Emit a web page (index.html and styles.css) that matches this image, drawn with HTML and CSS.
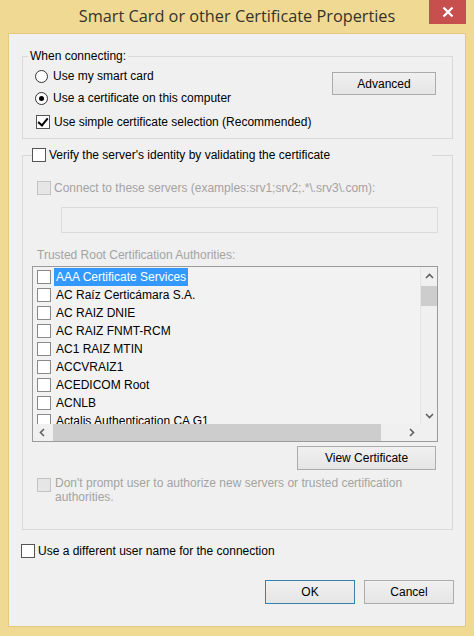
FILE: index.html
```html
<!DOCTYPE html>
<html lang="en">
<head>
    <meta charset="UTF-8">
    <title>Smart Card or other Certificate Properties</title>
    <link rel="stylesheet" href="styles.css">
</head>
<body>
    <div class="window">
        <div class="titlebar">
            <span class="title">Smart Card or other Certificate Properties</span>
            <button class="close" aria-label="Close">
                <svg width="12" height="10" viewBox="0 0 12 10">
                    <path d="M1.5 0.5 L10.5 9.5 M10.5 0.5 L1.5 9.5" stroke="#fff" stroke-width="2.2" fill="none"/>
                </svg>
            </button>
        </div>

        <div class="client">
            <!-- When connecting -->
            <fieldset class="group group-connect">
                <legend>When connecting:</legend>
                <div class="connect-body">
                    <div class="options">
                        <label class="opt"><span class="radio"></span>Use my smart card</label>
                        <label class="opt"><span class="radio on"></span>Use a certificate on this computer</label>
                        <label class="opt opt-check"><span class="check on"></span>Use simple certificate selection (Recommended)</label>
                    </div>
                    <button class="btn btn-advanced">Advanced</button>
                </div>
            </fieldset>

            <!-- Server validation -->
            <fieldset class="group group-verify">
                <legend><span class="check"></span>Verify the server's identity by validating the certificate</legend>

                <label class="opt opt-servers disabled"><span class="check off"></span>Connect to these servers (examples:srv1;srv2;.*\.srv3\.com):</label>
                <div class="textbox"></div>

                <div class="list-label">Trusted Root Certification Authorities:</div>
                <div class="list">
                    <div class="items">
                        <div class="item"><span class="check"></span><span class="name selected">AAA Certificate Services</span></div>
                        <div class="item"><span class="check"></span><span class="name">AC Raíz Certicámara S.A.</span></div>
                        <div class="item"><span class="check"></span><span class="name">AC RAIZ DNIE</span></div>
                        <div class="item"><span class="check"></span><span class="name">AC RAIZ FNMT-RCM</span></div>
                        <div class="item"><span class="check"></span><span class="name">AC1 RAIZ MTIN</span></div>
                        <div class="item"><span class="check"></span><span class="name">ACCVRAIZ1</span></div>
                        <div class="item"><span class="check"></span><span class="name">ACEDICOM Root</span></div>
                        <div class="item"><span class="check"></span><span class="name">ACNLB</span></div>
                        <div class="item"><span class="check"></span><span class="name">Actalis Authentication CA G1</span></div>
                    </div>
                    <div class="vscroll">
                        <span class="arrow">
                            <svg width="9" height="6" viewBox="0 0 9 6"><path d="M1 5 L4.5 1.5 L8 5" stroke="#606060" stroke-width="1.6" fill="none"/></svg>
                        </span>
                        <span class="vthumb"></span>
                        <span class="arrow arrow-end">
                            <svg width="9" height="6" viewBox="0 0 9 6"><path d="M1 1 L4.5 4.5 L8 1" stroke="#606060" stroke-width="1.6" fill="none"/></svg>
                        </span>
                    </div>
                    <div class="hscroll">
                        <span class="arrow">
                            <svg width="6" height="9" viewBox="0 0 6 9"><path d="M5 1 L1.5 4.5 L5 8" stroke="#606060" stroke-width="1.6" fill="none"/></svg>
                        </span>
                        <span class="hthumb"></span>
                        <span class="arrow arrow-end">
                            <svg width="6" height="9" viewBox="0 0 6 9"><path d="M1 1 L4.5 4.5 L1 8" stroke="#606060" stroke-width="1.6" fill="none"/></svg>
                        </span>
                    </div>
                    <div class="corner"></div>
                </div>

                <div class="view-row">
                    <button class="btn btn-view">View Certificate</button>
                </div>

                <label class="opt opt-prompt disabled"><span class="check off"></span><span>Don't prompt user to authorize new servers or trusted certification authorities.</span></label>
            </fieldset>

            <label class="opt opt-user"><span class="check"></span>Use a different user name for the connection</label>

            <div class="actions">
                <button class="btn btn-default">OK</button>
                <button class="btn">Cancel</button>
            </div>
        </div>
    </div>
</body>
</html>
```

FILE: styles.css
```css
body {
    margin: 0;
    background-color: #f0d993;
    font-family: "Liberation Sans", Arial, sans-serif;
    font-size: 12px;
    color: #000;
}
.window {
    width: 474px;
    height: 636px;
    display: flex;
    flex-direction: column;
}
.titlebar {
    height: 33px;
    display: grid;
    grid-template-columns: 1fr auto 1fr;
    align-items: start;
}
.title {
    grid-column: 2;
    font-family: "Open Sans", "Noto Sans", sans-serif;
    font-size: 16.3px;
    line-height: 33px;
    color: #34342a;
    white-space: nowrap;
}
.close {
    grid-column: 3;
    justify-self: end;
    margin-right: 8px;
    width: 37px;
    height: 24px;
    padding: 0;
    border: none;
    background-color: #c7504f;
    display: flex;
    align-items: center;
    justify-content: center;
}
.client {
    height: 594px;
    margin: 0 8px;
    box-sizing: border-box;
    border: 1px solid #e3c97f;
    background-color: #f0f0f0;
    padding: 15px 12px 0 13px;
}

/* group boxes */
.group {
    margin: 0;
    padding: 0;
    min-width: 0;
    border: 1px solid #d9d9d9;
}
.group legend {
    padding: 0 2px;
    line-height: 15px;
}
.group-connect legend {
    margin-left: -7px;
}
.group-connect {
    padding: 1px 16px 5px 12px;
}
.connect-body {
    display: flex;
    justify-content: space-between;
    align-items: flex-start;
}
.group-verify {
    margin-top: 8px;
    padding: 16px 14px 25px 9px;
}
.group-verify legend {
    margin-left: 0;
    width: 400px;
    box-sizing: border-box;
    display: flex;
    align-items: center;
    gap: 3px;
    padding: 0;
    height: 16px;
}

/* options */
.opt {
    display: flex;
    align-items: center;
    gap: 5px;
    height: 22px;
}
.opt-check {
    margin-top: 2px;
    gap: 4px;
}
.opt-check .check {
    margin-left: 1px;
}
.disabled {
    color: #a3a3a3;
}
.radio {
    width: 11px;
    height: 11px;
    border: 1px solid #333;
    border-radius: 50%;
    background-color: #fff;
    position: relative;
    flex: none;
}
.radio.on::after {
    content: "";
    position: absolute;
    left: 3px;
    top: 3px;
    width: 5px;
    height: 5px;
    border-radius: 50%;
    background-color: #000;
}
.check {
    width: 12px;
    height: 12px;
    border: 1px solid #555;
    background-color: #fff;
    flex: none;
    position: relative;
}
.check.on::after {
    content: "";
    position: absolute;
    left: 3px;
    top: 0px;
    width: 4px;
    height: 8px;
    border: solid #000;
    border-width: 0 2px 2px 0;
    transform: rotate(40deg);
}
.check.off {
    background-color: #e6e6e6;
    border-color: #c4c4c4;
}
.opt-servers {
    height: 18px;
    margin-left: 5px;
    gap: 3px;
}
.textbox {
    margin: 10px 0 0 29px;
    height: 24px;
    border: 1px solid #dadada;
    background-color: #f0f0f0;
}
.list-label {
    margin: 15px 0 0 5px;
    line-height: 15px;
    color: #a3a3a3;
}

/* list box */
.list {
    margin-top: 3px;
    height: 176px;
    box-sizing: border-box;
    border: 1px solid #9b9b9b;
    background-color: #f2f2f2;
    display: grid;
    grid-template-columns: 1fr 17px;
    grid-template-rows: 1fr 17px;
    overflow: hidden;
}
.items {
    padding: 1px 0 0 4px;
    overflow: hidden;
}
.item {
    height: 18px;
    display: flex;
    align-items: center;
    gap: 3px;
    white-space: nowrap;
}
.item .check {
    border-color: #8a8a8a;
}
.name {
    padding: 0 2px;
    line-height: 18px;
}
.name.selected {
    background-color: #3399ff;
    color: #fff;
}
.vscroll {
    display: flex;
    flex-direction: column;
    background-color: #f0f0f0;
    border-left: 1px solid #e4e4e4;
}
.hscroll {
    display: flex;
    background-color: #f0f0f0;
}
.corner {
    background-color: #f0f0f0;
}
.arrow {
    width: 17px;
    height: 17px;
    display: flex;
    align-items: center;
    justify-content: center;
    flex: none;
}
.arrow-end {
    margin-top: auto;
    margin-left: auto;
}
.vscroll .arrow {
    width: 16px;
}
.vthumb {
    margin: 2px 0 0 0;
    height: 20px;
    background-color: #cdcdcd;
}
.hthumb {
    margin-left: 3px;
    width: 328px;
    background-color: #cdcdcd;
}

/* buttons */
.btn {
    font-family: "Liberation Sans", Arial, sans-serif;
    font-size: 12px;
    color: #000;
    height: 23px;
    padding: 0;
    border: 1px solid #acacac;
    background: linear-gradient(#f0f0f0, #e5e5e5);
}
.btn-advanced {
    width: 104px;
    margin-top: 7px;
}
.view-row {
    display: flex;
    justify-content: flex-end;
    margin-top: 4px;
}
.btn-view {
    width: 139px;
    height: 24px;
    margin-right: 2px;
}
.opt-prompt {
    margin: 6px 0 0 5px;
    height: auto;
    align-items: flex-start;
    gap: 4px;
    line-height: 14px;
}
.opt-prompt .check {
    margin-top: 2px;
}
.opt-user {
    margin: 13px 0 0 -1px;
    height: 16px;
    gap: 3px;
}
.actions {
    margin-top: 21px;
    margin-right: -1px;
    display: flex;
    justify-content: flex-end;
    gap: 9px;
}
.actions .btn {
    width: 90px;
    height: 24px;
}
.btn-default {
    border-color: #3c7fb1;
}
```
